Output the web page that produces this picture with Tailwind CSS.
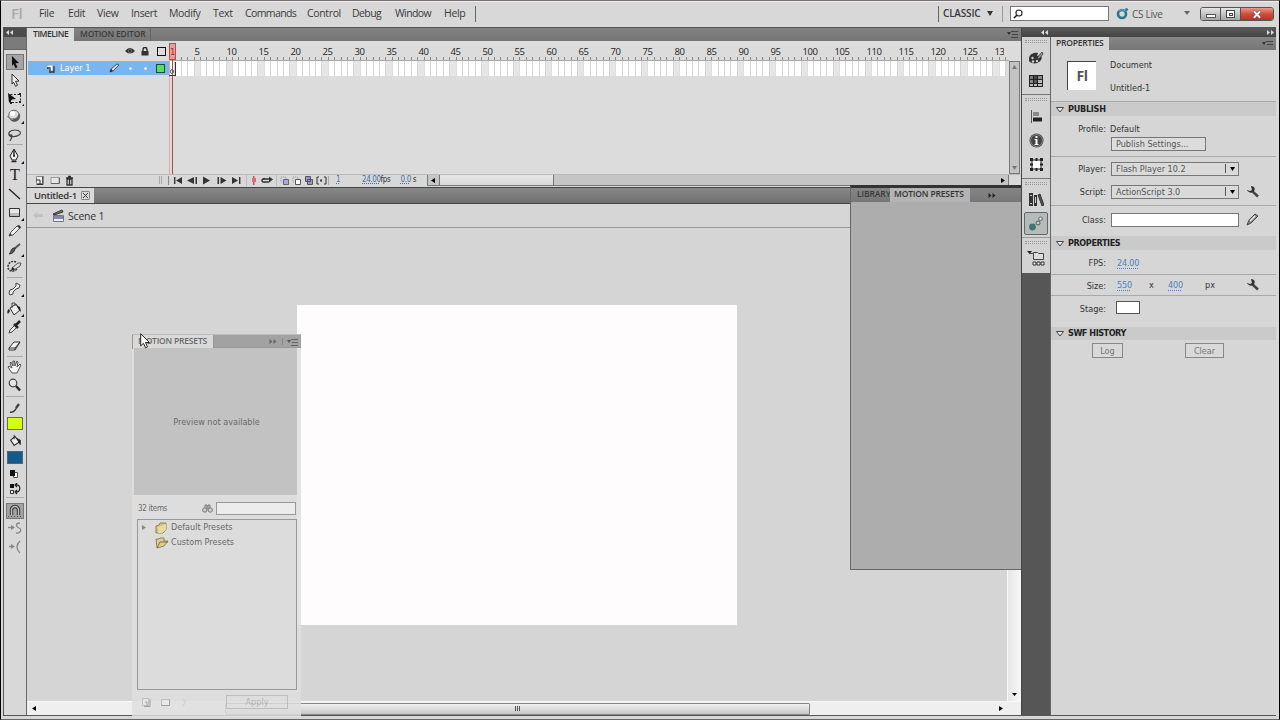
<!DOCTYPE html>
<html lang="en">
<head>
  <meta charset="UTF-8">
  <meta name="viewport" content="width=device-width, initial-scale=1.0">
  <title>Untitled-1</title>
  <script src="https://cdn.jsdelivr.net/npm/@tailwindcss/browser@4"></script>
</head>
<body class="bg-black overflow-hidden">
<div class="relative w-[1280px] h-[720px] flex flex-col bg-[#d7d7d7] border-x border-x-black border-t border-t-[#777075] border-b border-b-[#666] overflow-hidden font-['DejaVu_Sans_Condensed','DejaVu_Sans',sans-serif] text-[9px] leading-none text-[#333] whitespace-nowrap">

  <!-- Menu bar -->
  <header class="h-[26px] shrink-0 flex items-center border-t border-[#eee] bg-[#d8d8d8] font-['Open_Sans',sans-serif] text-[10px] tracking-[-0.3px] text-[#3a3a3a]">
    <div class="w-[38px] pl-[10px] pb-[2px] text-[15px] text-[#aaa] font-semibold tracking-[-0.5px]">Fl</div>
    <nav class="flex pb-[2px] text-[10.500px] tracking-[-0.35px]">
      <span class="w-[29px]">File</span><span class="w-[29px]">Edit</span><span class="w-[34px]">View</span><span class="w-[38px]">Insert</span><span class="w-[44px]">Modify</span><span class="w-[32px]">Text</span><span class="w-[62px] tracking-[-0.6px]">Commands</span><span class="w-[45px]">Control</span><span class="w-[43px] tracking-[-0.6px]">Debug</span><span class="w-[49px] tracking-[-0.6px]">Window</span><span class="w-[31px]">Help</span>
    </nav>
    <div class="w-px h-4 mb-[2px] bg-[#666]"></div>
    <div class="flex-1"></div>
    <div class="w-px h-4 mb-[2px] bg-[#666]"></div>
    <div class="w-[63px] pl-[4px] pb-[3px] flex items-center gap-[7px]">
      <span class="font-semibold tracking-[-0.2px]">CLASSIC</span>
      <svg class="w-[6px] h-[5px]" viewBox="0 0 6 5"><path d="M0 0h6L3 5z" fill="#333"/></svg>
    </div>
    <div class="w-px h-4 mb-[2px] bg-[#999]"></div>
    <div class="ml-[7px] w-[99px] h-[15px] mb-[2px] bg-white border border-[#777] flex items-center pl-[2px]">
      <svg class="w-[10px] h-[10px]" viewBox="0 0 10 10" fill="none" stroke="#222"><circle cx="6" cy="4" r="3" stroke-width="1.1"/><path d="M4 6L1 9" stroke-width="1.6"/></svg>
    </div>
    <svg class="ml-[7px] w-[13px] h-[13px] mb-[2px]" viewBox="0 0 13 13" fill="none"><circle cx="6" cy="7" r="4" stroke="#2f7489" stroke-width="2.6"/><path d="M3 4A4 4 0 0 1 9 4" stroke="#65a7bb" stroke-width="1.4"/><circle cx="10.5" cy="2.500" r="1.6" fill="#3c8298"/></svg>
    <span class="ml-[3px] w-[52px] pb-[2px] text-[#555]">CS Live</span>
    <svg class="w-[6px] h-[4px] mb-[3px]" viewBox="0 0 6 4"><path d="M0 0h6L3 4z" fill="#666"/></svg>
    <div class="ml-[10px] mr-[5px] mb-[1px] w-[74px] h-[14px] flex rounded-[3px] border border-[#555] overflow-hidden">
      <div class="w-[20px] border-r border-[#555] bg-linear-to-b from-[#e4e4e4] to-[#a6a6a6] flex items-center justify-center pt-[3px]"><div class="w-[10px] h-[4px] bg-white border border-[#555]"></div></div>
      <div class="w-[20px] border-r border-[#555] bg-linear-to-b from-[#e4e4e4] to-[#a6a6a6] flex items-center justify-center"><div class="w-[9px] h-[8px] bg-white border border-[#444] flex items-center justify-center"><div class="w-[4px] h-[3px] border border-[#444]"></div></div></div>
      <div class="flex-1 bg-linear-to-b from-[#e29a8c] via-[#cf4d3c] to-[#b9321f] flex items-center justify-center">
        <svg class="w-[10px] h-[9px]" viewBox="0 0 10 9"><path d="M1.500 1L8.500 8M8.500 1L1.500 8" stroke="#733" stroke-width="3"/><path d="M1.800 1.300L8.200 7.700M8.200 1.300L1.800 7.700" stroke="#fff" stroke-width="2"/></svg>
      </div>
    </div>
  </header>

  <div class="h-[689px] flex shrink-0 ml-[2px] mr-[3px] border-l border-b border-t border-[#555]">

    <!-- Tools -->
    <aside class="w-[23px] shrink-0 flex flex-col items-center border-r border-[#666] bg-[#d8d8d8]">
      <div class="w-full h-[9px] bg-[#4b4b4b] flex items-center pl-[2px]"><svg class="w-[7px] h-[5px]" viewBox="0 0 7 5"><path d="M3 0v5L0 2.500zM7 0v5L4 2.500z" fill="#ddd"/></svg></div>
      <div class="w-full h-[13px] bg-[#7b7b7b] border-b border-[#666]"></div>
      <div class="h-[4px] shrink-0"></div>
      <div class="w-[18px] h-[16px] shrink-0 bg-[#a5a5a5] border border-[#777] flex items-center justify-center"><svg class="w-4 h-4 shrink-0" viewBox="0 0 16 16"><path d="M5 2l7 7-3.500.3 2 4-2 1-2-4.200L5 12z" fill="#111"/></svg></div>
      <div class="h-[19px] shrink-0 flex items-center"><svg class="w-[18px] h-4" viewBox="0 0 18 16"><path d="M6 2l7 7-3.500.3 2 4-2 1-2-4.200L6 12z" fill="#eee" stroke="#333"/></svg></div>
      <div class="h-[18px] shrink-0 flex items-center"><svg class="w-[18px] h-4" viewBox="0 0 18 16"><path d="M4.500 4.500h10v8h-10z" fill="none" stroke="#222" stroke-dasharray="2 1.5"/><path d="M13 3h2v2h-2zM13 11h2v2h-2zM4 12h2v2H4z" fill="#222"/><path d="M2 3l8 6-4 .5L3 13z" fill="#111"/><path d="M18 14v2h-2z" fill="#111"/></svg></div>
      <div class="h-[18px] shrink-0 flex items-center"><svg class="w-[18px] h-4" viewBox="0 0 18 16"><circle cx="8" cy="7.500" r="5.300" fill="#ddd" stroke="#666"/><circle cx="6.500" cy="5.500" r="2.600" fill="#fff"/><path d="M13 5A5.500 5.500 0 0 1 4 11.500C9 12 12 9 13 5" fill="#555"/><path d="M1.500 8c0 3 9 4 13 0" fill="none" stroke="#777" stroke-width=".9"/><path d="M18 13v3h-3z" fill="#111"/></svg></div>
      <div class="h-[19px] shrink-0 flex items-center"><svg class="w-[18px] h-4" viewBox="0 0 18 16" fill="none" stroke="#444" stroke-width="1.200"><path d="M4 9C1 6 4 3 9 3s7 3 4 5-8 2-9 1 2-2 2 0-1 3-2 5"/></svg></div>
      <div class="w-4 h-px shrink-0 bg-[#aaa]"></div>
      <div class="h-[21px] shrink-0 flex items-center"><svg class="w-[18px] h-4" viewBox="0 0 18 16"><path d="M8 1l4 7-2 4H6L4 8z" fill="#eee" stroke="#222"/><path d="M8 2v6M5.500 13.500h5" stroke="#222" stroke-width="1.400"/><circle cx="8" cy="8" r="1" fill="#222"/><path d="M18 13v3h-3z" fill="#111"/></svg></div>
      <div class="h-[18px] shrink-0 flex items-center font-['Liberation_Serif',serif] text-[16px] text-[#222]">T</div>
      <div class="h-[19px] shrink-0 flex items-center"><svg class="w-[18px] h-4" viewBox="0 0 18 16"><path d="M3 3l11 10" stroke="#222" stroke-width="1.300"/></svg></div>
      <div class="h-[19px] shrink-0 flex items-center"><svg class="w-[18px] h-4" viewBox="0 0 18 16"><path d="M3.500 3.500h10v8h-10z" fill="#bbb" stroke="#333"/><path d="M4 4h9v4H4z" fill="#e8e8e8"/><path d="M18 13v3h-3z" fill="#111"/></svg></div>
      <div class="h-[18px] shrink-0 flex items-center"><svg class="w-[18px] h-4" viewBox="0 0 18 16"><path d="M3 13l2-4 6-6 3 1-1 2-6 6z" fill="#eee" stroke="#555"/><path d="M3 13l1-3 2 2zM11 3l3 3 1-2-2-2z" fill="#333"/></svg></div>
      <div class="h-[18px] shrink-0 flex items-center"><svg class="w-[18px] h-4" viewBox="0 0 18 16"><path d="M14 3L8 8" stroke="#555" stroke-width="2"/><path d="M9 7c0 4-3 6-6 6 2-1 1-4 4-6z" fill="#555" stroke="#222" stroke-width=".7"/><path d="M18 13v3h-3z" fill="#111"/></svg></div>
      <div class="h-[18px] shrink-0 flex items-center"><svg class="w-[18px] h-4" viewBox="0 0 18 16"><path d="M10 3C6 1 2 4 2 8s5 6 9 2" fill="none" stroke="#333" stroke-width="1.500" stroke-dasharray="2 1"/><path d="M6 9l6-5 3 0-1 3-6 4z" fill="#ddd" stroke="#555"/><path d="M5 12l1-4 3 2z" fill="#222"/></svg></div>
      <div class="h-px my-[1px] w-4 shrink-0 bg-[#aaa]"></div>
      <div class="h-[20px] shrink-0 flex items-center"><svg class="w-[18px] h-4" viewBox="0 0 18 16"><path d="M3 12l1-3 3-1 3-3V2l2 1 2 1-1 3-3 1-3 3 0 2-3 1z" fill="#eee" stroke="#444"/><path d="M18 13v3h-3z" fill="#111"/></svg></div>
      <div class="h-[19px] shrink-0 flex items-center"><svg class="w-[18px] h-4" viewBox="0 0 18 16"><path d="M4 7l6-4 4 6-6 5z" fill="#eee" stroke="#333"/><path d="M3 8C1 9 1 12 2 13l2-3zM10 4l4 2 1 5-2-2z" fill="#222"/><path d="M6 7V2h3v3" fill="none" stroke="#444"/><path d="M18 13v3h-3z" fill="#111"/></svg></div>
      <div class="h-[18px] shrink-0 flex items-center"><svg class="w-[18px] h-4" viewBox="0 0 18 16"><path d="M3 14l1-3 5-5 2 2-5 5z" fill="#eee" stroke="#444"/><path d="M8 5l4 4M10 6l4-4" stroke="#222" stroke-width="2.500"/></svg></div>
      <div class="h-[19px] shrink-0 flex items-center"><svg class="w-[18px] h-4" viewBox="0 0 18 16"><path d="M3 10l5-6h6l-5 8H3z" fill="#f4f4f4" stroke="#333"/><path d="M3 10h6l5-6M9 10v2" fill="none" stroke="#333"/></svg></div>
      <div class="h-px my-[1px] w-4 shrink-0 bg-[#aaa]"></div>
      <div class="h-[18px] shrink-0 flex items-center"><svg class="w-[18px] h-4" viewBox="0 0 18 16"><path d="M6 14L2 8l1-1 3 2-2-5 1-1 2 4V2h1.500L9 7l2-5 1 1-1 5 3-3 1 1-3 6-1 2z" fill="#f5f5f5" stroke="#444" stroke-width=".9"/></svg></div>
      <div class="h-[18px] shrink-0 flex items-center"><svg class="w-[18px] h-4" viewBox="0 0 18 16"><circle cx="7" cy="6" r="3.800" fill="#e6e6e6" stroke="#444" stroke-width="1.200"/><path d="M10 9l4 4.500" stroke="#222" stroke-width="2.300"/></svg></div>
      <div class="h-px my-[2px] w-[18px] shrink-0 bg-[#aaa]"></div>
      <div class="h-[18px] shrink-0 flex items-center"><svg class="w-[18px] h-4" viewBox="0 0 18 16"><path d="M4 12c3 1 5-1 7-5" fill="none" stroke="#333" stroke-width="1.400"/><path d="M10 8l3-4" stroke="#444" stroke-width="2.400"/></svg></div>
      <div class="w-4 h-[13px] shrink-0 bg-[#d4ff13] border border-[#6b6b45]"></div>
      <div class="h-[21px] shrink-0 flex items-center"><svg class="w-4 h-[14px]" viewBox="0 0 18 16"><path d="M4 7l5-4 5 6-6 4z" fill="#eee" stroke="#333" stroke-width="1.300"/><path d="M11 5l4 2 0 5-2-3M8 6V1" fill="#222" stroke="#222"/></svg></div>
      <div class="w-4 h-[13px] shrink-0 bg-[#145a8a] border border-[#4a6880]"></div>
      <div class="h-[20px] shrink-0 flex items-center"><svg class="w-4 h-3" viewBox="0 0 16 12"><path d="M6.500 4.500h4v5h-4z" fill="#fff" stroke="#555"/><path d="M3 2h5v6H3z" fill="#111"/></svg></div>
      <div class="h-[10px] shrink-0 flex items-center"><svg class="w-4 h-3" viewBox="0 0 16 12"><path d="M3 1h4v4H3z" fill="#111"/><path d="M3.500 7.500h3v3h-3z" fill="#fff" stroke="#222"/><path d="M9 2c5-1 5 7 0 7M10 7l-2 2 2 2M10 0L8 2l2 2" fill="none" stroke="#222" stroke-width="1.200"/></svg></div>
      <div class="h-px mt-[3px] mb-[5px] w-[18px] shrink-0 bg-[#aaa]"></div>
      <div class="w-[18px] h-[16px] shrink-0 bg-[#a3a3a3] border border-[#777] flex items-center justify-center"><svg class="w-[14px] h-[14px] shrink-0" viewBox="0 0 14 14"><path d="M3.500 11V6a3.500 3.500 0 0 1 7 0v5" fill="none" stroke="#333" stroke-width="3.400"/><path d="M3.500 11V6a3.500 3.500 0 0 1 7 0v5" fill="none" stroke="#bbb" stroke-width="1.500"/><path d="M0 12.500h14" stroke="#444" stroke-dasharray="1 2"/></svg></div>
      <div class="h-[18px] shrink-0 flex items-center"><svg class="w-[18px] h-4" viewBox="0 0 18 16"><path d="M2 7.500h4" stroke="#888" stroke-width="1.300"/><path d="M5 5l4 2.500L5 10z" fill="#888"/><path d="M14 3c-5 0-4 4-1 5s2 6-3 5" fill="none" stroke="#888" stroke-width="1.300"/></svg></div>
      <div class="h-[19px] shrink-0 flex items-center"><svg class="w-[18px] h-4" viewBox="0 0 18 16"><path d="M3 7.500h4" stroke="#888" stroke-width="1.300"/><path d="M5 5l4 2.500L5 10z" fill="#888"/><path d="M14 2c-4 4-4 8 0 12" fill="none" stroke="#888" stroke-width="1.300"/></svg></div>
    </aside>

    <!-- Timeline and document -->
    <main class="w-[994px] shrink-0 flex flex-col">
      <div class="h-[13px] shrink-0 flex bg-linear-to-b from-[#828282] to-[#757575] text-[8.500px] font-['Open_Sans',sans-serif] font-semibold">
        <div class="w-[47px] bg-[#dcdcdc] pl-[6px] pt-[2px] tracking-[-0.4px]">TIMELINE</div>
        <div class="w-[77px] pl-[6px] pt-[2px] border-r border-[#666] text-[#3d3d3d] tracking-[-0.2px]">MOTION EDITOR</div>
        <div class="flex-1"></div>
        <svg class="w-[12px] h-[8px] mt-[2px] mr-[2px]" viewBox="0 0 12 8"><path d="M0 2h4L2 5z" fill="#333"/><path d="M4 1.500h7M5 4.500h6M4 7.500h7" stroke="#444"/></svg>
      </div>
      <div class="relative h-[133px] shrink-0 flex bg-[#dcdcdc]">
        <div class="w-[142px] shrink-0 pl-[1px]">
          <div class="h-[20px] flex items-center pl-[97px] gap-[6px]">
            <svg class="w-[10px] h-[8px]" viewBox="0 0 10 8"><path d="M0 4q5-6 10 0-5 5-10 0" fill="#333"/><circle cx="5" cy="4" r="1.700" fill="#999"/><circle cx="5" cy="4" r=".9"/></svg>
            <svg class="w-[8px] h-[9px]" viewBox="0 0 8 9"><path d="M2 4V2.500a2 2 0 0 1 4 0V4" fill="none" stroke="#222" stroke-width="1.300"/><path d="M.5 4h7v4.500h-7z" fill="#333"/></svg>
            <div class="ml-[2px] w-[9px] h-[9px] border-[1.500px] border-[#111]"></div>
          </div>
          <div class="h-[14px] flex items-center bg-[#79b5ee]">
            <svg class="ml-[18px] w-[9px] h-[9px]" viewBox="0 0 9 9"><path d="M1 1h6v6H4L1 4z" fill="#fff" stroke="#8ab"/><path d="M1 4h3v3M8 2v6H3" fill="none" stroke="#333" stroke-width="1.300"/></svg>
            <span class="ml-[5px] w-[49px] text-white">Layer 1</span>
            <svg class="w-[11px] h-[10px]" viewBox="0 0 11 10"><path d="M1 9l1-3 6-5 2 1-6 6z" fill="#ddd" stroke="#456"/><path d="M1 9l1-3 2 2z" fill="#222"/></svg>
            <div class="ml-[9px] w-[3px] h-[3px] rounded-full bg-[#d6edff]"></div>
            <div class="ml-[12px] w-[3px] h-[3px] rounded-full bg-[#d6edff]"></div>
            <div class="ml-[9px] w-[9px] h-[9px] bg-[#55df66] border border-[#224a2a]"></div>
          </div>
        </div>
        <div class="flex-1 overflow-hidden flex flex-col">
          <div id="ruler" class="h-[15px] w-[835px] shrink-0 flex items-end font-['Open_Sans',sans-serif] text-[9.500px] tracking-[-0.5px] text-[#222] overflow-hidden"></div>
          <div id="ticks" class="h-[5px] shrink-0 flex items-end border-b border-[#aaa] overflow-hidden"></div>
          <div id="frames" class="h-[15px] shrink-0 flex overflow-hidden"></div>
        </div>
        <div class="w-[11px] shrink-0 mt-[20px] mr-[1px] bg-[#c3c3c3] border border-[#777] flex flex-col justify-between items-center py-[3px]">
          <svg class="w-[5px] h-[4px]" viewBox="0 0 5 4"><path d="M0 4h5L2.500 0z" fill="#777"/></svg>
          <svg class="w-[5px] h-[4px]" viewBox="0 0 5 4"><path d="M0 0h5L2.500 4z" fill="#777"/></svg>
        </div>
        <!-- Playhead -->
        <div class="absolute left-[142px] top-[2px] w-[7px] h-[17px] bg-[#f58b8b]/80 border border-[#c24848] text-[9px] pt-[4px] text-center text-[#933]">1</div>
        <div class="absolute left-[142px] top-[19px] w-px h-[114px] bg-[#dfa9a9]"></div>
        <div class="absolute left-[145px] top-[19px] w-px h-[114px] bg-[#a84b4b]"></div>
        <div class="absolute left-[142px] top-[21px] w-[7px] h-[14px] border-r border-b border-[#333]"></div>
        <div class="absolute left-[143px] top-[28px] w-[4px] h-[5px] rounded-full border border-[#666]"></div>
      </div>

      <!-- Playback controls -->
      <div class="h-[13px] shrink-0 flex items-start bg-[#d8d8d8] border-t border-[#bbb] text-[8px]">
        <svg class="ml-[8px] w-[38px] h-[11px]" viewBox="0 0 38 11" fill="none" stroke="#333"><path d="M1.500 1.500h6v7h-6z" fill="#eee" stroke="#888"/><path d="M1 5h4v4M1.500 9.500h6.500V1"/><path d="M16 2.500h8v6h-8z" fill="#e6e6e6" stroke="#999"/><path d="M16 8.500h8.500v-6" stroke="#666"/><path d="M32 4h5v6h-5zM31 3h7M33 1.500h3M34.500 4v6" stroke-width="1.300"/></svg>
        <div class="ml-[86px] mt-[1px] w-[3px] h-[8px] border-x border-[#aaa]"></div>
        <div class="ml-[6px] mt-[1px] w-px h-[9px] bg-[#888]"></div>
        <svg class="ml-[3px] w-[150px] h-[11px]" viewBox="0 0 150 11" fill="#333">
          <path d="M2 2h1.400v7H2zM10 2v7L4 5.500zM22 2v7l-7-3.500zM23.500 2H25v7h-1.500zM31 1.500v8l7-4zM45.500 2H47v7h-1.500zM48.500 2v7l6-3.500zM60 2v7l6-3.500zM67 2h1.400v7H67z"/>
          <path d="M74 0h1v11h-1z" fill="#bbb"/><path d="M81 1h1.500v9H81z" fill="#d0525c"/><path d="M80 3h4v4h-4z" fill="#e36a76"/>
          <path d="M93 4c-4-1-4 4 0 3h4" fill="none" stroke="#333" stroke-width="1.500"/><path d="M91 4h8" stroke="#333" stroke-width="1.500"/><path d="M97 1.500l4 3-4 3z"/>
          <path d="M104 0h1v11h-1z" fill="#bbb"/>
          <path d="M109 2h5v5h-5z" fill="none" stroke="#999" stroke-dasharray="1 1"/><path d="M111.500 4.500h5v5h-5z" fill="#aaa8df" stroke="#666"/>
          <path d="M121 2h5v5h-5z" fill="none" stroke="#999" stroke-dasharray="1 1"/><path d="M123.500 4.500h5v5h-5z" fill="#fff" stroke="#555"/>
          <path d="M133.500 1.500h5v5h-5zM135.500 4.500h5v5h-5z" fill="#9896cf" stroke="#555"/>
          <path d="M147 2h-2v7h2" fill="none" stroke="#333"/>
        </svg>
        <svg class="w-[8px] h-[11px] -ml-[2px]" viewBox="0 0 8 11"><path d="M4 2h2v7H4" fill="none" stroke="#333"/><circle cx="1" cy="5.500" r="1.200" fill="#444"/></svg>
        <div class="mt-[1px] w-px h-[9px] bg-[#aaa]"></div>
        <span class="ml-[7px] mt-[1px] w-[26px] text-[#4a7ba8] underline decoration-dotted">1</span>
        <span class="mt-[1px] text-[#3f71a3] underline decoration-dotted tracking-[-0.4px]">24.00</span><span class="mt-[1px] w-[20px] tracking-[-0.3px]">fps</span>
        <span class="mt-[1px] w-[26px] tracking-[-0.4px]"><span class="text-[#3f71a3] underline decoration-dotted">0.0</span> s</span>
        <div class="flex-1 h-[11px] mr-[12px] flex items-center border border-t-0 border-[#777] bg-[#c5c5c5]">
          <div class="w-[12px] h-full border-r border-[#777] flex items-center justify-center"><svg class="w-[4px] h-[5px]" viewBox="0 0 4 5"><path d="M4 0v5L0 2.500z"/></svg></div>
          <div class="w-[114px] h-full bg-linear-to-b from-[#e8e8e8] to-[#d8d8d8] border-r border-[#777]"></div>
          <div class="flex-1"></div>
          <svg class="w-[4px] h-[5px] mr-[3px]" viewBox="0 0 4 5"><path d="M0 0v5l4-2.500z"/></svg>
        </div>
      </div>

      <!-- Document tabs -->
      <div class="h-[17px] shrink-0 border-y border-[#444] bg-linear-to-b from-[#888] to-[#707070] flex font-['Open_Sans',sans-serif] text-[9.500px] font-semibold">
        <div class="w-[67px] bg-[#d9d9d9] flex items-center pl-[7px] tracking-[-0.3px]"><span class="w-[47px]">Untitled-1</span>
          <div class="w-[9px] h-[9px] rounded-[1px] border border-[#888] flex items-center justify-center"><svg class="w-[5px] h-[5px]" viewBox="0 0 5 5"><path d="M0 0l5 5M5 0L0 5" stroke="#333"/></svg></div>
        </div>
      </div>
      <div class="h-[24px] shrink-0 flex items-center border-b border-[#999] bg-[#d6d6d6] font-['Open_Sans',sans-serif] text-[10.500px] tracking-[-0.2px]">
        <svg class="ml-[6px] w-[10px] h-[7px]" viewBox="0 0 10 7"><path d="M0 3.500L4 0v2h6v3H4v2z" fill="#c2c2c2"/></svg>
        <svg class="ml-[9px] w-[13px] h-[13px]" viewBox="0 0 13 13"><path d="M1.500 6.500h10v6h-10z" fill="#eee" stroke="#777"/><path d="M2 7h9v3H2z" fill="#8585b4"/><path d="M1 5l9-4 1 2-9 3z" fill="#897f54" stroke="#333"/></svg>
        <span class="ml-[3px] pt-px">Scene 1</span>
      </div>

      <!-- Pasteboard -->
      <div class="flex-1 flex bg-[#d5d5d5]">
        <div class="w-[980px] shrink-0 pl-[270px] pt-[77px]"><div class="w-[440px] h-[320px] bg-[#fefcfd]"></div></div>
        <div class="flex-1 bg-linear-to-r from-[#e6e6e6] to-[#f8f8f8] border-l border-[#f8f8f8] flex flex-col justify-end items-center pb-[5px]"><svg class="w-[5px] h-[3px]" viewBox="0 0 5 3"><path d="M0 0h5L2.500 3z"/></svg></div>
      </div>
      <div class="h-[14px] shrink-0 flex items-center bg-[#efefef] border-t border-[#f8f8f8]">
        <svg class="ml-[5px] w-[4px] h-[5px]" viewBox="0 0 4 5"><path d="M4 0v5L0 2.500z"/></svg>
        <div class="ml-[189px] w-[585px] h-[12px] rounded-[1px] border border-[#888] bg-linear-to-b from-[#f0f0f0] to-[#c6c6c6] flex items-center justify-center gap-px">
          <div class="w-px h-[5px] bg-[#555]"></div><div class="w-px h-[5px] bg-[#555]"></div><div class="w-px h-[5px] bg-[#555]"></div>
        </div>
        <div class="flex-1"></div>
        <svg class="w-[4px] h-[5px] mr-[18px]" viewBox="0 0 4 5"><path d="M0 0v5l4-2.500z"/></svg>
      </div>
    </main>

    <!-- Right side -->
    <div class="flex-1 flex flex-col border-l border-[#444] bg-[#565656]">
      <div class="h-[9px] shrink-0 bg-linear-to-b from-[#5a5a5a] to-[#444] flex items-center justify-between pl-[19px] pr-[2px]">
        <svg class="w-[7px] h-[5px]" viewBox="0 0 7 5"><path d="M3 0v5L0 2.500zM7 0v5L4 2.500z" fill="#ddd"/></svg>
        <svg class="w-[7px] h-[5px]" viewBox="0 0 7 5"><path d="M0 0v5l3-2.500zM4 0v5l3-2.500z" fill="#ddd"/></svg>
      </div>
      <div class="flex-1 flex">
        <!-- Collapsed panels -->
        <div class="w-[28px] shrink-0 flex flex-col">
          <div class="h-[58px] shrink-0 bg-[#d3d3d3] border-b border-[#777] flex flex-col items-center pt-[3px]">
            <div class="w-[22px] h-[3px] border-y border-dotted border-[#999]"></div>
            <svg class="mt-[7px] w-4 h-4" viewBox="0 0 16 16"><path d="M1 9c0-5 5-7 9-6l-1 3c4-1 6 1 4 4s-6 4-9 3-3-2-3-4" fill="#333"/><circle cx="4.500" cy="8" r="1.200" fill="#ccc"/><circle cx="5" cy="11.500" r="1.200" fill="#ccc"/><circle cx="9" cy="11" r="1.200" fill="#ccc"/><path d="M9 8l5-6 1 2-4 5z" fill="#999" stroke="#222" stroke-width=".7"/></svg>
            <svg class="mt-[9px] w-[14px] h-[12px]" viewBox="0 0 14 12"><path d="M0 0h14v12H0z" fill="#222"/><path d="M1 1h3v3H1z" fill="#777"/><path d="M5 1h3v3H5z" fill="#444"/><path d="M9 1h4v3H9zM1 5h3v3H1z" fill="#888"/><path d="M5 5h3v3H5z" fill="#555"/><path d="M9 5h4v3H9zM1 9h3v2H1zM5 9h3v2H5zM9 9h4v2H9z" fill="#bbb"/></svg>
          </div>
          <div class="h-[84px] shrink-0 bg-[#d3d3d3] border-b border-[#777] flex flex-col items-center pt-[3px]">
            <div class="w-[22px] h-[3px] border-y border-dotted border-[#999]"></div>
            <svg class="mt-[9px] w-[13px] h-[13px]" viewBox="0 0 13 13"><path d="M1 0h1v13H1z" fill="#555"/><path d="M3 2h6v4H3z" fill="#888"/><path d="M3 7.500h9v4H3z" fill="#222"/></svg>
            <svg class="mt-[10px] w-[15px] h-[15px]" viewBox="0 0 15 15"><circle cx="7.500" cy="7.500" r="7" fill="#444"/><circle cx="7.500" cy="7.500" r="6" fill="none" stroke="#888"/><path d="M6.500 3h2v2h-2zM5.500 6h3v5h1v1h-4v-1h1V7h-1z" fill="#fff"/></svg>
            <svg class="mt-[10px] w-[13px] h-[13px]" viewBox="0 0 13 13"><path d="M2 2h9v9H2z" fill="#fff" stroke="#222"/><path d="M0 0h3v3H0zM10 0h3v3h-3zM0 10h3v3H0zM10 10h3v3h-3zM5.500 0h2v3h-2zM5.500 10h2v3h-2zM0 5.500h3v2H0zM10 5.500h3v2h-3z" fill="#222"/></svg>
          </div>
          <div class="h-[59px] shrink-0 bg-[#d3d3d3] border-b border-[#999] flex flex-col items-center pt-[3px]">
            <div class="w-[22px] h-[3px] border-y border-dotted border-[#999]"></div>
            <svg class="mt-[8px] w-[15px] h-[13px]" viewBox="0 0 15 13"><path d="M0 0h4v13H0zM5 2h3v11H5z" fill="#333"/><path d="M1 2h2v1H1zM1 10h2v1H1zM6 4h1v6H6z" fill="#ccc"/><path d="M9 2l2-1 4 11-2 1z" fill="#555" stroke="#222" stroke-width=".8"/></svg>
            <div class="mt-[6px] w-[24px] h-[23px] rounded-[2px] border border-[#666] bg-[#b5bbbb] flex items-center justify-center"><svg class="w-4 h-4" viewBox="0 0 16 16"><circle cx="4.500" cy="11" r="3.400" fill="#3e7771"/><circle cx="10" cy="7" r="2" fill="#ccc" stroke="#555"/><circle cx="12.500" cy="2.800" r="1.800" fill="#ddd" stroke="#666"/></svg></div>
          </div>
          <div class="h-[35px] shrink-0 bg-[#d3d3d3] flex flex-col items-center pt-[3px]">
            <div class="w-[22px] h-[3px] border-y border-dotted border-[#999]"></div>
            <svg class="mt-[7px] w-[18px] h-[15px]" viewBox="0 0 18 15"><path d="M0 0h5L2.500 3z" fill="#222"/><path d="M2.500 2.500h4" stroke="#444"/><path d="M6.500 1.500h4l1 1h5v6h-10z" fill="#ddd" stroke="#444"/><path d="M6 11h3v3H6zM10 11h3v3h-3zM14 11h3v3h-3z" fill="#eee" stroke="#333"/></svg>
          </div>
        </div>

        <!-- Properties -->
        <div class="flex-1 flex flex-col border-l border-[#666] bg-[#d6d6d6]">
          <div class="h-[13px] shrink-0 flex bg-linear-to-b from-[#868686] to-[#777]">
            <div class="w-[58px] bg-[#d6d6d6] pl-[5px] pt-[2px] font-['Open_Sans',sans-serif] text-[8.500px] font-semibold tracking-[-0.2px]">PROPERTIES</div>
            <div class="flex-1"></div>
            <svg class="w-[12px] h-[8px] mt-[3px] mr-[2px]" viewBox="0 0 12 8"><path d="M0 2h4L2 5z" fill="#333"/><path d="M4 1.500h7M5 4.500h6" stroke="#444"/></svg>
          </div>
          <div class="h-[51px] shrink-0 flex pl-[16px]">
            <div class="mt-[11px] w-[29px] h-[29px] bg-white border-t border-l border-[#444] flex items-center justify-center font-['Open_Sans',sans-serif] font-bold text-[14px] tracking-[-0.5px] text-[#555]">Fl</div>
            <div class="ml-[14px] pt-[11px] flex flex-col gap-[14px]"><span>Document</span><span>Untitled-1</span></div>
          </div>
          <div class="h-[15px] shrink-0 border-t border-[#aaa] bg-[#cacaca] flex items-center pl-[5px] gap-[4px] font-bold tracking-[-0.25px] text-[#222]"><svg class="w-[8px] h-[6px] mt-px" viewBox="0 0 8 6"><path d="M.5.5h7L4 5z" fill="#eee" stroke="#444"/></svg>PUBLISH</div>
          <div class="h-[41px] shrink-0 flex border-b border-[#aaa]">
            <span class="w-[55px] text-right pt-[9px]">Profile:</span>
            <div class="ml-[4px] pt-[9px]"><div>Default</div><div class="mt-[3px] ml-px w-[95px] h-[14px] border border-[#777] bg-[#dcdcdc] pl-[4px] pt-[1.500px] text-[#555]">Publish Settings...</div></div>
          </div>
          <div class="h-[49px] shrink-0 flex flex-col justify-center gap-[9px] pb-[2px] border-b border-[#aaa]">
            <div class="flex items-center"><span class="w-[55px] text-right pt-px">Player:</span><div class="ml-[5px] w-[128px] h-[14px] border border-[#777] bg-[#dadada] flex items-center text-[#555]"><span class="flex-1 pl-[4px] pt-px">Flash Player 10.2</span><div class="w-[13px] h-[9px] border-l border-[#555] flex items-center justify-center"><svg class="w-[5px] h-[4px]" viewBox="0 0 5 4"><path d="M0 0h5L2.500 4z"/></svg></div></div></div>
            <div class="flex items-center"><span class="w-[55px] text-right pt-px">Script:</span><div class="ml-[5px] w-[128px] h-[14px] border border-[#777] bg-[#dadada] flex items-center text-[#555]"><span class="flex-1 pl-[4px] pt-px">ActionScript 3.0</span><div class="w-[13px] h-[9px] border-l border-[#555] flex items-center justify-center"><svg class="w-[5px] h-[4px]" viewBox="0 0 5 4"><path d="M0 0h5L2.500 4z"/></svg></div></div>
              <svg class="ml-[8px] w-[12px] h-[12px]" viewBox="0 0 12 12"><path d="M5 5l6 5.500" stroke="#444" stroke-width="2.500"/><path d="M4 0c4 0 5 4 2 6S0 5 0 4l3 1 2-1z" fill="#333"/></svg></div>
          </div>
          <div class="h-[30px] shrink-0 flex items-center pb-[3px]"><span class="w-[55px] text-right pt-px">Class:</span><div class="ml-[5px] w-[128px] h-[14px] border border-[#777] bg-white"></div>
            <svg class="ml-[7px] w-[13px] h-[13px]" viewBox="0 0 13 13"><path d="M1 12l2-5 6-6 3 2-7 7z" fill="#888" stroke="#444"/><path d="M4 8l5-5" stroke="#eee" stroke-width="1.500"/></svg></div>
          <div class="h-[14px] shrink-0 bg-[#cacaca] flex items-center pl-[5px] gap-[4px] font-bold tracking-[-0.4px] text-[#222]"><svg class="w-[8px] h-[6px] mt-px" viewBox="0 0 8 6"><path d="M.5.5h7L4 5z" fill="#eee" stroke="#444"/></svg>PROPERTIES</div>
          <div class="h-[25px] shrink-0 flex items-center border-b border-[#aaa] pt-[2px]"><span class="w-[55px] text-right">FPS:</span><span class="ml-[11px] text-[#4c82bc] tracking-[-0.2px] underline decoration-dotted underline-offset-2">24.00</span></div>
          <div class="h-[21px] shrink-0 flex items-center border-b border-[#aaa]"><span class="w-[55px] text-right pt-[2px]">Size:</span><span class="ml-[11px] w-[32px] pt-px text-[#4c82bc] tracking-[-0.2px] underline decoration-dotted underline-offset-2">550</span><span class="w-[19px] pt-px">x</span><span class="w-[37px] pt-px text-[#4c82bc] tracking-[-0.2px] underline decoration-dotted underline-offset-2">400</span><span class="w-[42px] pt-px">px</span>
            <svg class="w-[12px] h-[12px]" viewBox="0 0 12 12"><path d="M5 5l6 5.500" stroke="#444" stroke-width="2.500"/><path d="M4 0c4 0 5 4 2 6S0 5 0 4l3 1 2-1z" fill="#333"/></svg></div>
          <div class="h-[31px] shrink-0 flex pt-[5px]"><span class="w-[55px] text-right pt-[4px]">Stage:</span><div class="ml-[10px] w-[24px] h-[13px] border border-[#555] bg-white"></div></div>
          <div class="h-[13px] shrink-0 bg-[#cacaca] flex items-center pl-[5px] gap-[4px] font-bold tracking-[-0.45px] text-[#222]"><svg class="w-[8px] h-[6px] mt-px" viewBox="0 0 8 6"><path d="M.5.5h7L4 5z" fill="#eee" stroke="#444"/></svg>SWF HISTORY</div>
          <div class="flex pt-[3px] pl-[41px] text-[#777]"><div class="w-[31px] h-[15px] border border-[#888] bg-[#d9d9d9] text-center pt-[3px]">Log</div><div class="ml-[62px] w-[39px] h-[15px] border border-[#888] bg-[#d9d9d9] text-center pt-[3px]">Clear</div></div>
        </div>
      </div>
    </div>
  </div>

  <!-- Docked library / motion presets drawer -->
  <section class="absolute left-[849px] top-[184px] w-[171px] h-[385px] bg-[#adadad] border-l border-b border-[#666] border-t-[3px] border-t-[#333]">
    <div class="h-[14px] flex bg-linear-to-b from-[#858585] to-[#777] font-['Open_Sans',sans-serif] text-[8.500px] font-semibold">
      <div class="w-[39px] pl-[6px] pt-[2px] overflow-hidden text-[#3a3a3a] tracking-[-0.1px]">LIBRARY</div>
      <div class="w-[80px] bg-[#b4b4b4] pl-[4px] pt-[2px] tracking-[-0.15px]">MOTION PRESETS</div>
      <svg class="ml-[18px] mt-[5px] w-[8px] h-[5px]" viewBox="0 0 7 5"><path d="M0 0v5l3-2.500zM4 0v5l3-2.500z" fill="#222"/></svg>
    </div>
  </section>

  <!-- Motion presets panel being dragged -->
  <section class="absolute left-[131px] top-[333px] w-[169px] h-[384px] flex flex-col bg-[#dedede]/85 text-[#6a6a6a]">
    <div class="h-[14px] shrink-0 flex bg-[#a2a2a2] border-t border-[#bbb] border-b border-b-[#999] font-['Open_Sans',sans-serif] text-[8.500px] font-semibold">
      <div class="w-[82px] h-[14px] bg-[#d9d9d9] border-x border-[#999] pl-[5px] pt-[2px] tracking-[-0.2px]">MOTION PRESETS</div>
      <svg class="ml-[55px] mt-[4px] w-[8px] h-[5px]" viewBox="0 0 7 5"><path d="M0 0v5l3-2.500zM4 0v5l3-2.500z" fill="#666"/></svg>
      <div class="ml-[5px] mt-[3px] w-px h-[7px] bg-[#888]"></div>
      <svg class="w-[12px] h-[8px] mt-[3px] ml-[4px]" viewBox="0 0 12 8"><path d="M0 2h4L2 5z" fill="#555"/><path d="M4 1.500h7M5 4.500h6M4 7.500h7" stroke="#666"/></svg>
    </div>
    <div class="ml-[2px] mr-[4px] h-[147px] shrink-0 bg-[#c2c2c2] flex items-center justify-center pt-px pl-[2px]">Preview not available</div>
    <div class="h-[24px] shrink-0 flex items-center pl-[6px] pt-[2px]">
      <span class="w-[64px] pt-[2px] text-[8px] tracking-[-0.3px]">32 items</span>
      <svg class="w-[11px] h-[9px]" viewBox="0 0 11 9" fill="#ccc" stroke="#777"><path d="M3 1h2v4H3zM6 1h2v4H6z"/><circle cx="2.800" cy="6" r="2.200"/><circle cx="8.200" cy="6" r="2.200"/></svg>
      <div class="ml-[3px] w-[80px] h-[13px] border border-[#999] bg-[#ececec]"></div>
    </div>
    <div class="ml-[5px] w-[160px] h-[171px] shrink-0 border border-[#999] bg-[#dcdcdc]">
      <div class="h-[15px] flex items-center"><svg class="ml-[4px] w-[5px] h-[5px]" viewBox="0 0 5 5"><path d="M0 0v5l4-2.500z" fill="#888"/></svg>
        <svg class="ml-[8px] w-[12px] h-[12px]" viewBox="0 0 12 12"><path d="M1 4l3-1 1-2 6-0v7l-3 3H1z" fill="#d4c378" stroke="#8c8358"/><path d="M3 5l8-3v6l-4 3H3z" fill="#e7dc9f"/></svg><span class="ml-[4px]">Default Presets</span></div>
      <div class="h-[15px] flex items-center"><svg class="ml-[17px] w-[14px] h-[12px]" viewBox="0 0 14 12"><path d="M1 2h3l1-1h4v3h4l-4 5-7 2z" fill="#ddd092" stroke="#8c8358"/><path d="M2 11l3-6h8" fill="none" stroke="#776e45"/></svg><span class="ml-[2px]">Custom Presets</span></div>
    </div>
    <div class="h-[24px] shrink-0 flex items-center pl-[9px] opacity-60">
      <svg class="w-[48px] h-[10px]" viewBox="0 0 48 10" fill="none" stroke="#777"><path d="M1.500 1.500h6v7h-6z" fill="#eee" stroke="#aaa"/><path d="M4 5h2v4M3 9.500h6V2"/><path d="M20.500 2.500h8v6h-8z" fill="#eee" stroke="#aaa"/><path d="M20 8.500h8.500v-6"/><path d="M42 3c3-1 3 2 0 6" stroke="#bbb"/></svg>
      <div class="ml-[37px] w-[62px] h-[14px] border border-[#aaa] text-center pt-[2px] text-[#999]">Apply</div>
    </div>
  </section>
  <svg class="absolute left-[139px] top-[332px] w-[10px] h-[16px]" viewBox="0 0 10 16"><path d="M.7.800v12l2.800-2.500 2 4.500 2-1-2-4.300h4z" fill="#fff" stroke="#222"/></svg>
</div>

<script>
  const ruler = document.getElementById('ruler');
  const ticks = document.getElementById('ticks');
  const frames = document.getElementById('frames');

  // Frame numbers: 1, then every fifth frame
  for (let n = 0; n <= 130; n += 5) {
    const label = document.createElement('span');
    label.className = n === 0 ? 'w-[25.6px] shrink-0' : 'w-[32px] shrink-0';
    label.textContent = n === 0 ? '' : n;
    ruler.appendChild(label);
  }

  for (let i = 1; i <= 131; i++) {
    const tick = document.createElement('div');
    tick.className = 'w-[6.4px] h-[3px] shrink-0 border-r border-[#888]';
    ticks.appendChild(tick);

    const frame = document.createElement('div');
    frame.className = i % 5 === 0
      ? 'w-[6.4px] shrink-0 bg-[#e6e6e6] border-r border-[#ddd]'
      : 'w-[6.4px] shrink-0 bg-white border-r border-[#d4d4d4]';
    frames.appendChild(frame);
  }
</script>
</body>
</html>
